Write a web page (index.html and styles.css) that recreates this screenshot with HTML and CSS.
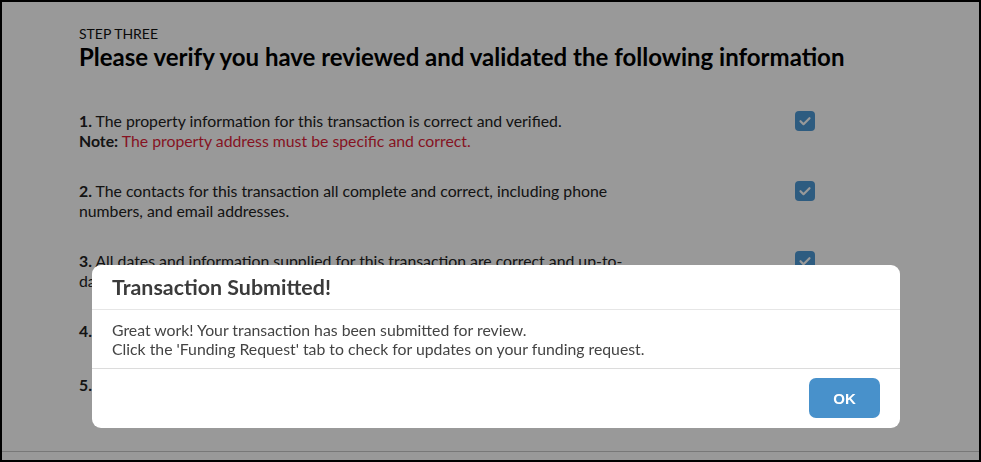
FILE: index.html
```
<!DOCTYPE html>
<html>
<head>
<meta charset="utf-8">
<link rel="stylesheet" href="styles.css">
</head>
<body>
<div class="page">
  <main class="content">
    <div class="step">Step Three</div>
    <h1 class="title">Please verify you have reviewed and validated the following information</h1>
    <ol class="items">
      <li class="item">
        <div class="text"><b>1.</b> The property information for this transaction is correct and verified.<br><b>Note:</b> <span class="warn">The property address must be specific and correct.</span></div>
        <span class="check"><svg viewBox="0 0 20 20" width="20" height="20"><path d="M5.5 10.2l3 3 6-6" fill="none" stroke="#fff" stroke-width="2.2" stroke-linecap="round" stroke-linejoin="round"/></svg></span>
      </li>
      <li class="item">
        <div class="text"><b>2.</b> The contacts for this transaction all complete and correct, including phone numbers, and email addresses.</div>
        <span class="check"><svg viewBox="0 0 20 20" width="20" height="20"><path d="M5.5 10.2l3 3 6-6" fill="none" stroke="#fff" stroke-width="2.2" stroke-linecap="round" stroke-linejoin="round"/></svg></span>
      </li>
      <li class="item">
        <div class="text"><b>3.</b> All dates and information supplied for this transaction are correct and up-to-date.</div>
        <span class="check"><svg viewBox="0 0 20 20" width="20" height="20"><path d="M5.5 10.2l3 3 6-6" fill="none" stroke="#fff" stroke-width="2.2" stroke-linecap="round" stroke-linejoin="round"/></svg></span>
      </li>
      <li class="item item-tall">
        <div class="text"><b>4.</b> All documents have been uploaded.</div>
        <span class="check"><svg viewBox="0 0 20 20" width="20" height="20"><path d="M5.5 10.2l3 3 6-6" fill="none" stroke="#fff" stroke-width="2.2" stroke-linecap="round" stroke-linejoin="round"/></svg></span>
      </li>
      <li class="item">
        <div class="text"><b>5.</b> I confirm the information is accurate.</div>
        <span class="check"><svg viewBox="0 0 20 20" width="20" height="20"><path d="M5.5 10.2l3 3 6-6" fill="none" stroke="#fff" stroke-width="2.2" stroke-linecap="round" stroke-linejoin="round"/></svg></span>
      </li>
    </ol>
  </main>
  <footer class="footer"></footer>
</div>
<div class="overlay">
  <div class="modal">
    <div class="modal-head">Transaction Submitted!</div>
    <div class="modal-body">Great work! Your transaction has been submitted for review.<br>Click the 'Funding Request' tab to check for updates on your funding request.</div>
    <div class="modal-foot"><button class="ok">OK</button></div>
  </div>
</div>
</body>
</html>
```
FILE: styles.css
```
html, body {
  margin: 0;
  padding: 0;
  height: 100%;
  overflow: hidden;
}
body {
  font-family: Lato, "Open Sans", sans-serif;
  background: #000;
}
.page {
  box-sizing: border-box;
  height: 462px;
  border: 2px solid #000;
  background: #fff;
  display: flex;
  flex-direction: column;
  overflow: hidden;
}
.content {
  flex: 1;
  padding: 24px 0 0 77px;
}
.step {
  text-transform: uppercase;
  font-size: 14px;
  line-height: 16px;
  color: #111;
}
.title {
  margin: 0;
  font-size: 24px;
  line-height: 30px;
  font-weight: 700;
  color: #000;
}
.items {
  list-style: none;
  margin: 39px 0 0;
  padding: 0;
}
.item {
  display: flex;
  align-items: flex-start;
  margin-bottom: 30px;
}
.item-tall {
  margin-bottom: 34px;
}
.text {
  width: 560px;
  font-size: 15.8px;
  line-height: 20px;
  color: #222;
}
.text b {
  font-weight: 700;
}
.warn {
  color: #e01f3a;
}
.check {
  margin-left: 156px;
  width: 20px;
  height: 20px;
  border-radius: 4px;
  background: #4e99d5;
  display: flex;
  align-items: center;
  justify-content: center;
}
.check svg {
  display: block;
}
.footer {
  height: 8px;
  border-top: 1px solid #c8c8c8;
}
.overlay {
  position: fixed;
  inset: 0;
  background: rgba(0, 0, 0, 0.4);
  display: flex;
  align-items: flex-end;
  padding: 0 81px 34px 92px;
}
.modal {
  width: 808px;
  background: #fff;
  border-radius: 9px;
  overflow: hidden;
}
.modal-head {
  padding: 12px 20px;
  font-size: 21.4px;
  line-height: 20px;
  font-weight: 700;
  color: #3b3b3b;
  border-bottom: 1px solid #e6e6e6;
}
.modal-body {
  padding: 10px 20px 10px;
  font-size: 15.8px;
  line-height: 19px;
  color: #444;
  border-bottom: 1px solid #dcdcdc;
}
.modal-foot {
  display: flex;
  justify-content: flex-end;
  padding: 9px 20px 10px;
}
.ok {
  width: 71px;
  height: 40px;
  border: 0;
  border-radius: 7px;
  background: #4891cb;
  color: #fff;
  font-family: "Liberation Sans", Arial, sans-serif;
  font-weight: 700;
  font-size: 15px;
}
```
